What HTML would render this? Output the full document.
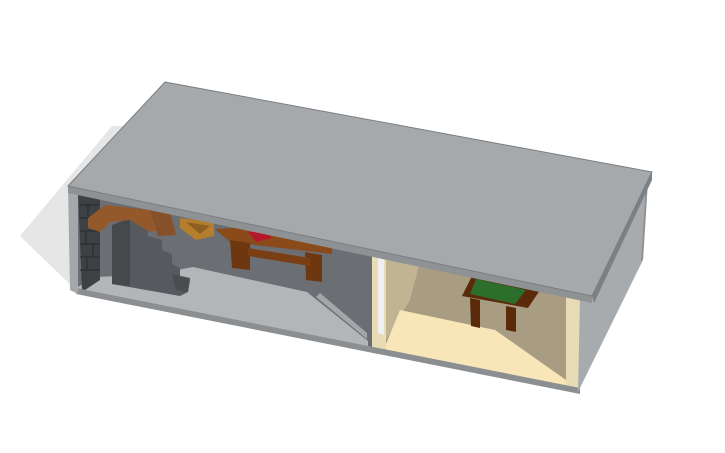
<!DOCTYPE html>
<html><head><style>html,body{margin:0;padding:0;background:#fff;width:725px;height:453px;overflow:hidden}</style></head>
<body>
<svg width="725" height="453" viewBox="0 0 725 453" xmlns="http://www.w3.org/2000/svg">
<polygon points="112,126 126,126 70,188 78,292 20,236" fill="#e6e6e6"/>
<polygon points="78,190 372,250 372,348 78,290" fill="#6b6e72"/>
<polygon points="78,287 93,277 150,275 193,267 307,292 368,341 368,348 78,291" fill="#b3b5b8"/>
<polygon points="320,293 367,333 367,339 316,297" fill="#a4a7aa"/>
<polygon points="78,192 100,196 100,280 82,292" fill="#3e4144"/>
<g stroke="#25282a" stroke-width="1" fill="none">
<path d="M80,205H99M80,218H99M80,231H99M80,244H99M80,257H99M80,270H99M88,205V218M94,218V231M86,231V244M93,244V257M87,257V270"/>
</g>
<polygon points="113,225 130,218 148,226 148,236 162,240 162,250 172,254 172,264 180,268 180,278 190,280 188,292 180,296 112,284" fill="#56595d"/>
<polygon points="112,225 130,218 130,286 112,284" fill="#46494c"/>
<polygon points="172,274 190,278 188,292 176,290" fill="#4a4d50"/>
<polygon points="88,218 105,205 168,212 165,228 150,232 130,220 110,222 100,232 88,228" fill="#94592b"/>
<polygon points="150,210 170,212 176,235 158,236" fill="#86502a"/>
<polygon points="180,218 214,222 214,236 196,240 180,228" fill="#b47e2d"/>
<polygon points="186,222 210,226 200,234" fill="#8c5e22"/>
<polygon points="215,229 260,226 332,246 332,254 230,242" fill="#8a4a1a"/>
<polygon points="230,240 250,243 250,270 232,268" fill="#6e3710"/>
<polygon points="305,252 322,255 322,282 306,280" fill="#6e3710"/>
<polygon points="248,248 310,258 310,266 248,256" fill="#7a3e14"/>
<polygon points="248,232 264,230 272,238 256,242" fill="#b5182a"/>
<polygon points="372,250 386,252 386,352 372,349" fill="#e8dcb6"/>
<polygon points="378,258 384,259 384,335 378,333" fill="#f0f0f0"/>
<polygon points="386,252 566,286 566,386 386,350" fill="#a89d82"/>
<polygon points="386,252 420,262 410,300 386,340" fill="#c1b493"/>
<polygon points="386,351 386,344 400,310 495,330 566,380 566,387" fill="#f8e6b8"/>
<polygon points="472,276 500,278 540,290 528,308 462,296" fill="#5b2a0a"/>
<polygon points="476,279 526,290 515,304 470,294" fill="#2c6e2b"/>
<polygon points="470,298 480,300 480,328 471,326" fill="#5b2a0a"/>
<polygon points="506,306 516,308 516,332 506,330" fill="#5b2a0a"/>
<polygon points="566,286 580,290 580,392 566,389" fill="#e8dcb6"/>
<polygon points="76,288 580,388 580,394 76,294" fill="#8c8f92"/>
<polygon points="68,186 78,190 78,294 70,290" fill="#a5a8ab"/>
<polygon points="580,297 648,180 643,260 578,392" fill="#a8abae"/>
<polygon points="648,180 643,260 641,262 646,184" fill="#8e9194"/>
<polygon points="68,186 592,296 592,303 68,193" fill="#8f9295"/>
<polygon points="592,296 652,172 652,180 594,303" fill="#7d8083"/>
<polygon points="165,82 652,172 592,296 68,186" fill="#a6a9ac" stroke="#7a7d80" stroke-width="1"/>
</svg>
</body></html>
